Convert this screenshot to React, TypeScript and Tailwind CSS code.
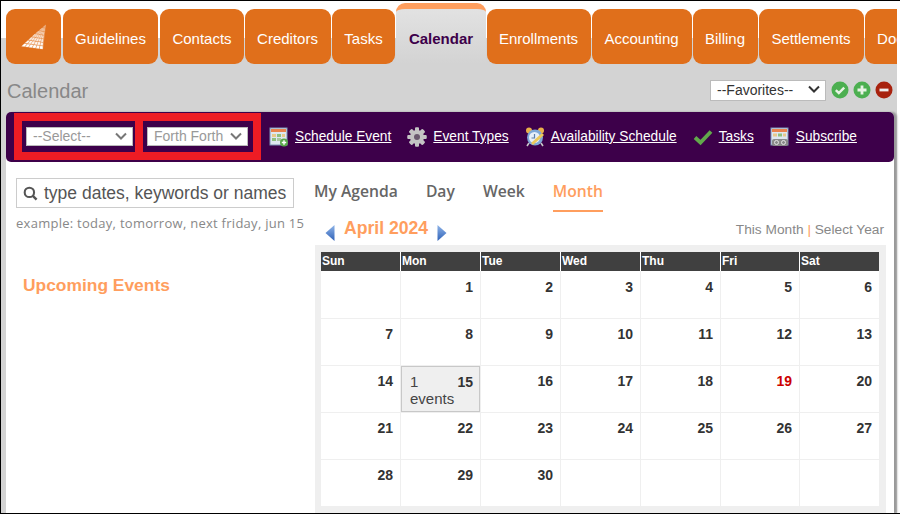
const TABS = [
  { label: 'Guidelines', w: 'w-[95px] mr-[1px]' },
  { label: 'Contacts', w: 'w-[84px]' },
  { label: 'Creditors', w: 'w-[86px] pr-[1px]' },
  { label: 'Tasks', w: 'w-[63px]' },
]

const TABS_RIGHT = [
  { label: 'Enrollments', w: 'w-[104px] pr-[1px]' },
  { label: 'Accounting', w: 'w-[100px] pr-[1px]' },
  { label: 'Billing', w: 'w-[65px] pr-[1px]' },
  { label: 'Settlements', w: 'w-[105px] pr-[1px]' },
  { label: 'Documents', w: 'w-[100px]' },
]

const DAYS = ['Sun', 'Mon', 'Tue', 'Wed', 'Thu', 'Fri', 'Sat']

// April 2024 starts on a Monday
const CELLS: (number | null)[] = [
  null, 1, 2, 3, 4, 5, 6,
  7, 8, 9, 10, 11, 12, 13,
  14, 15, 16, 17, 18, 19, 20,
  21, 22, 23, 24, 25, 26, 27,
  28, 29, 30, null, null, null, null,
]

function Tab({ label, w }: { label: string; w: string }) {
  return (
    <div className={`${w} h-[55px] shrink-0 rounded-[9px] bg-[#e06f1b] pt-[5px] flex items-center justify-center text-[15px] text-white whitespace-nowrap`}>
      {label}
    </div>
  )
}

// point on the fan: u runs left to right along the base, v from base to tip
function fanPoint(u: number, v: number) {
  const x0 = 21 + 22 * u
  const y0 = 45.5 + 3 * u
  const cx = 33 + 10 * u
  const cy = 34 + 2 * u
  const r = 1 - v
  return {
    x: r * r * x0 + 2 * r * v * cx + v * v * 46,
    y: r * r * y0 + 2 * r * v * cy + v * v * 23.5,
  }
}

function LogoFan() {
  const cells: { points: string; opacity: number }[] = []
  const cols = 6
  const rows = 7
  for (let c = 0; c < cols; c++) {
    for (let r = 0; r < rows; r++) {
      const u0 = (c + 0.1) / cols
      const u1 = (c + 0.9) / cols
      const v0 = (r + 0.1) / rows
      const v1 = (r + 0.88) / rows
      const pts = [fanPoint(u0, v0), fanPoint(u1, v0), fanPoint(u1, v1), fanPoint(u0, v1)]
      cells.push({
        points: pts.map(p => `${p.x.toFixed(2)},${p.y.toFixed(2)}`).join(' '),
        opacity: 1 - 0.72 * (r / rows),
      })
    }
  }
  return (
    <svg viewBox="14 18 40 36" className="w-[40px] h-[36px]">
      <path d="M46 23.5 L43 48.5 L21 45.5 Q33 34 46 23.5Z" fill="#fff" opacity="0.28" />
      {cells.map((c, i) => <polygon key={i} points={c.points} fill="#fff" opacity={c.opacity} />)}
    </svg>
  )
}

function SelectBox({ label, w, h, text, chevron }: { label: string; w: string; h: string; text: string; chevron: string }) {
  return (
    <div className={`relative ${w} ${h}`}>
      <select className={`appearance-none block w-full h-full bg-white border border-[#bbb] text-[14px] leading-none pl-[6px] pt-0 pb-[1px] ${text}`}>
        <option>{label}</option>
      </select>
      <svg viewBox="0 0 12 8" className="absolute right-[6px] top-[5px] w-[12px] h-[8px] pointer-events-none">
        <path d="M1 1.5 L6 6.5 L11 1.5" stroke={chevron} strokeWidth="2" fill="none" />
      </svg>
    </div>
  )
}

function RoundIcon({ color, kind }: { color: string; kind: 'check' | 'plus' | 'minus' }) {
  return (
    <svg viewBox="0 0 18 18" className="w-[18px] h-[18px]">
      <circle cx="9" cy="9" r="8.5" fill={color} />
      {kind === 'check' && <path d="M4.8 9.2 L7.8 12 L13.2 6.6" stroke="#e8f3e4" strokeWidth="2.4" fill="none" />}
      {kind === 'plus' && <path d="M9 4.5 V13.5 M4.5 9 H13.5" stroke="#e8f3e4" strokeWidth="2.8" />}
      {kind === 'minus' && <path d="M4.5 9 H13.5" stroke="#eee" strokeWidth="2.8" />}
    </svg>
  )
}

function CalendarPlusIcon() {
  return (
    <svg viewBox="0 0 20 20" className="w-[20px] h-[20px] shrink-0">
      <rect x="1" y="1" width="17" height="17" fill="#dfe7f0" stroke="#7d93b5" />
      <rect x="2" y="2" width="15" height="3" fill="#e9824d" />
      <rect x="3" y="7" width="4" height="3" fill="#e8c98c" />
      <rect x="8" y="7" width="4" height="3" fill="#8fbf7f" />
      <rect x="13" y="7" width="3" height="3" fill="#e8c98c" />
      <rect x="3" y="11" width="4" height="3" fill="#8fbf7f" />
      <rect x="8" y="11" width="4" height="3" fill="#a9c5a0" />
      <circle cx="15" cy="15.5" r="4" fill="#5aa64a" />
      <path d="M15 13.3 V17.7 M12.8 15.5 H17.2" stroke="#fff" strokeWidth="1.4" />
    </svg>
  )
}

function GearIcon() {
  return (
    <svg viewBox="0 0 20 20" className="w-[20px] h-[20px] shrink-0">
      <g fill="#c4c4c4">
        {[0, 45, 90, 135, 180, 225, 270, 315].map(a => (
          <rect key={a} x="8" y="0.5" width="4" height="19" rx="1" transform={`rotate(${a} 10 10)`} />
        ))}
        <circle cx="10" cy="10" r="7" />
      </g>
      <circle cx="10" cy="10" r="3" fill="#6a5a6e" />
    </svg>
  )
}

function ClockIcon() {
  return (
    <svg viewBox="0 0 20 20" className="w-[20px] h-[20px] shrink-0">
      <circle cx="4" cy="3.5" r="3" fill="#e9b04a" />
      <circle cx="16" cy="3.5" r="3" fill="#e9b04a" />
      <path d="M4 16 L2 19 M16 16 L18 19" stroke="#c8c8c8" strokeWidth="1.6" />
      <circle cx="10" cy="10.5" r="8" fill="#7fa9d8" />
      <circle cx="9.5" cy="10.5" r="5.5" fill="#e6f0fa" />
      <path d="M9.5 7 V11 H6.5" stroke="#5f7fa8" strokeWidth="1.2" fill="none" />
      <path d="M7 17 L18 7" stroke="#ecc95a" strokeWidth="3" />
    </svg>
  )
}

function CheckIcon() {
  return (
    <svg viewBox="0 0 20 20" className="w-[20px] h-[20px] shrink-0">
      <path d="M2 10.5 L7.5 15.5 L18 4.5" stroke="#62a84c" strokeWidth="3.8" fill="none" />
    </svg>
  )
}

function SubscribeIcon() {
  return (
    <svg viewBox="0 0 20 20" className="w-[20px] h-[20px] shrink-0">
      <rect x="1" y="1" width="17" height="17" fill="#dfe7f0" stroke="#7d93b5" />
      <rect x="2" y="2" width="15" height="3" fill="#e9824d" />
      <rect x="3" y="6.5" width="4" height="3" fill="#e8c98c" />
      <rect x="8" y="6.5" width="4" height="3" fill="#8fbf7f" />
      <rect x="13" y="6.5" width="3" height="3" fill="#e8c98c" />
      <rect x="2" y="12" width="16" height="7" rx="2" fill="#8a8a8a" />
      <circle cx="6.5" cy="15.5" r="2" fill="none" stroke="#e4e4e4" />
      <circle cx="13.5" cy="15.5" r="2" fill="none" stroke="#e4e4e4" />
    </svg>
  )
}

function ToolbarLink({ icon, label }: { icon: React.ReactNode; label: string }) {
  return (
    <a className="flex items-center gap-[6px] text-[13.75px] text-white underline whitespace-nowrap cursor-pointer">
      {icon}
      {label}
    </a>
  )
}

function Arrow({ flip }: { flip?: boolean }) {
  return (
    <svg viewBox="0 0 10 16" className={`w-[10px] h-[16px] translate-y-[4px] ${flip ? 'scale-x-[-1]' : ''}`}>
      <defs>
        <linearGradient id={flip ? 'arrowR' : 'arrowL'} x1="0" y1="0" x2="0" y2="1">
          <stop offset="0" stopColor="#8fb4e8" />
          <stop offset="1" stopColor="#2f62b8" />
        </linearGradient>
      </defs>
      <path d="M9.5 0 V16 L0.5 8Z" fill={`url(#${flip ? 'arrowR' : 'arrowL'})`} />
    </svg>
  )
}

export default function App() {
  return (
    <div className="w-[900px] h-[514px] overflow-hidden bg-white border-t border-l border-b border-black font-['Liberation_Sans',Arial,sans-serif]">
      <div className="w-[896px] h-full flex flex-col bg-[linear-gradient(to_bottom,#fff_37px,#d3d3d3_37px)]">
        {/* Tabs */}
        <div className="h-[63px] shrink-0 pl-[5px] flex items-end gap-[1px] overflow-hidden">
          <div className="w-[55px] h-[55px] mr-[1px] shrink-0 rounded-[9px] bg-[#e06f1b] flex items-center justify-center">
            <LogoFan />
          </div>
          {TABS.map(t => <Tab key={t.label} {...t} />)}
          <div className="w-[90px] h-[61px] shrink-0 rounded-t-[9px] border-t-[6px] border-[#ff9e5e] bg-[linear-gradient(to_bottom,#e2e2e2,#d3d3d3)] pt-[6px] flex items-center justify-center text-[15px] font-bold text-[#3d004a]">
            Calendar
          </div>
          {TABS_RIGHT.map(t => <Tab key={t.label} {...t} />)}
        </div>

        {/* Title row */}
        <div className="h-[48px] shrink-0 pl-[6px] pr-[4px] pt-1 flex items-center justify-between">
          <h1 className="text-[20px] text-[#888] mt-[1px]">Calendar</h1>
          <div className="flex items-center gap-[4px]">
            <div className="mr-[1px]">
              <SelectBox label="--Favorites--" w="w-[116px]" h="h-[21px]" text="text-[#333]" chevron="#333" />
            </div>
            <RoundIcon color="#4caf50" kind="check" />
            <RoundIcon color="#4caf50" kind="plus" />
            <RoundIcon color="#a8220e" kind="minus" />
          </div>
        </div>

        {/* Panel */}
        <div className="ml-[5px] w-[888px] flex-1 min-h-0 bg-white shadow-[3px_0_2px_#999] flex flex-col rounded-t-[5px]">
          {/* Toolbar */}
          <div className="h-[50px] shrink-0 rounded-[5px] bg-[#3d004a] pl-[8px] pt-[1px] flex items-start gap-[8px]">
            <div className="h-[47px] bg-[#ed1c24] p-[8px] flex gap-[8px]">
              <div className="w-[113px] h-[31px] bg-[#3d004a] pl-[4px] flex items-center">
                <SelectBox label="--Select--" w="w-[107px]" h="h-[19px]" text="text-[#999]" chevron="#777" />
              </div>
              <div className="w-[110px] h-[31px] bg-[#3d004a] pl-[4px] flex items-center">
                <SelectBox label="Forth Forth" w="w-[101px]" h="h-[19px]" text="text-[#999]" chevron="#777" />
              </div>
            </div>
            <div className="h-[47px] pt-[1px] flex items-center gap-[16px]">
              <ToolbarLink icon={<CalendarPlusIcon />} label="Schedule Event" />
              <ToolbarLink icon={<GearIcon />} label="Event Types" />
              <ToolbarLink icon={<ClockIcon />} label="Availability Schedule" />
              <ToolbarLink icon={<CheckIcon />} label="Tasks" />
              <ToolbarLink icon={<SubscribeIcon />} label="Subscribe" />
            </div>
          </div>

          <div className="flex-1 min-h-0 flex">
            {/* Left column */}
            <div className="w-[308px] shrink-0 pl-[10px] pt-[16px]">
              <div className="w-[278px] h-[30px] border border-[#ccc] flex items-center pl-[6px] gap-[6px] text-[17.5px] text-[#555] whitespace-nowrap">
                <svg viewBox="0 0 16 16" className="w-[15px] h-[15px] shrink-0">
                  <circle cx="6.8" cy="6.8" r="5" fill="none" stroke="#555" strokeWidth="2.2" />
                  <path d="M10.5 10.5 L14.5 14.5" stroke="#555" strokeWidth="2.6" />
                </svg>
                type dates, keywords or names
              </div>
              <p className="mt-[6px] text-[13px] leading-[18px] text-[#888] whitespace-nowrap font-['Open_Sans',sans-serif] tracking-[0.27px]">
                example: today, tomorrow, next friday, jun 15
              </p>
              <h2 className="mt-[41px] ml-[7px] text-[17.4px] leading-[24px] font-bold text-[#ff9e5e]">Upcoming Events</h2>
            </div>

            {/* Right column */}
            <div className="w-[572px] flex flex-col">
              <div className="h-[50px] shrink-0 flex gap-[28px] font-['Open_Sans',sans-serif] text-[15.7px] font-semibold text-[#666]">
                <span className="pt-[18px]">My Agenda</span>
                <span className="pt-[18px]">Day</span>
                <span className="pt-[18px]">Week</span>
                <span className="pt-[18px] text-[#ff9e5e] border-b-2 border-[#ff9e5e]">Month</span>
              </div>
              <div className="h-[33px] shrink-0 pl-[11px] pr-[2px] flex items-center justify-between">
                <div className="flex items-center gap-[9px] pt-[2px]">
                  <Arrow />
                  <span className="text-[17.6px] font-bold text-[#ff9e5e] -mt-[3px]">April 2024</span>
                  <Arrow flip />
                </div>
                <div className="text-[13.7px] text-[#888] pt-[3px]">
                  This Month <span className="text-[#ff9e5e]">|</span> Select Year
                </div>
              </div>

              {/* Calendar */}
              <div className="ml-[1px] w-[571px] flex-1 bg-[#efefef] px-[6px] pt-[7px]">
                <div className="w-[558px] grid grid-cols-[79px_79px_79px_79px_79px_78px_79px] gap-x-px bg-white">
                  {DAYS.map(d => (
                    <div key={d} className="h-[19px] bg-[#404040] pl-[1px] text-[12px] leading-[19px] font-bold text-white">{d}</div>
                  ))}
                </div>
                <div className="w-[558px] grid grid-cols-[79px_79px_79px_79px_79px_78px_79px] grid-rows-[47px_46px_46px_46px_46px] gap-px">
                  {CELLS.map((d, i) => {
                    if (d === 15) {
                      return (
                        <div key={i} className="bg-[#efefef] border border-[#c8c8c8] pl-[8px] pr-[6px] pt-[6px] text-[15px] leading-[17px] text-[#444]">
                          <div className="flex justify-between">
                            <span>1</span>
                            <span className="pt-[1px] text-[14px] font-bold text-[#333]">15</span>
                          </div>
                          <div className="-mt-[1px]">events</div>
                        </div>
                      )
                    }
                    return (
                      <div key={i} className={`bg-white pr-[7px] ${i < 7 ? 'pt-[8px]' : 'pt-[7px]'} text-right text-[14px] leading-[16px] font-bold ${d === 19 ? 'text-[#cc0000]' : 'text-[#333]'}`}>
                        {d}
                      </div>
                    )
                  })}
                </div>
              </div>
            </div>
          </div>
        </div>
      </div>
    </div>
  )
}
